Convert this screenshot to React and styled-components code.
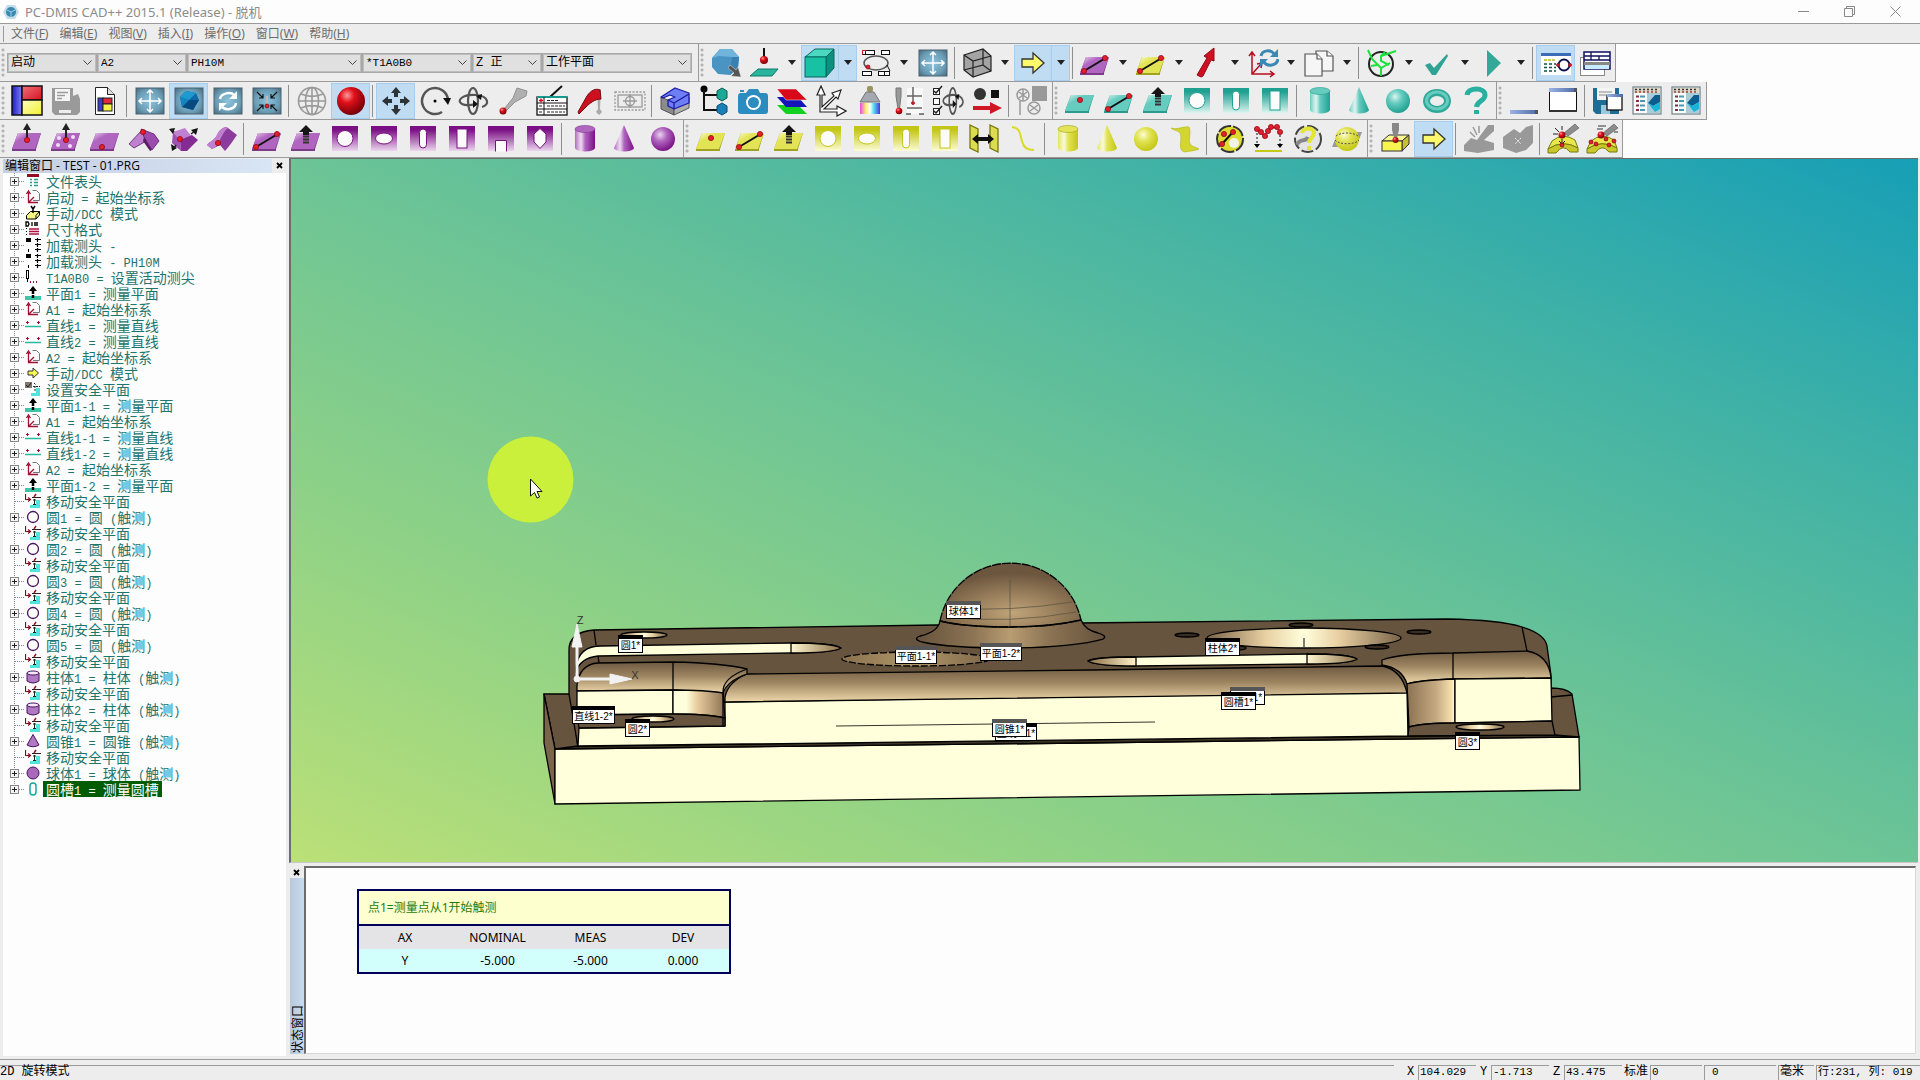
import React from "react";
import styled, { createGlobalStyle, css } from "styled-components";

const CJK = '"Noto Sans CJK SC", sans-serif';

const GlobalStyle = createGlobalStyle`
  *, *::before, *::after { box-sizing: border-box; }
  html, body { margin: 0; padding: 0; background: #ededed; }
  body { font-family: "Open Sans", ${CJK}; font-size: 12px; color: #000; }
  button, select { font: inherit; color: inherit; margin: 0; padding: 0; border: 0; background: none; border-radius: 0; }
  svg { display: block; }
`;

/* ------------------------------------------------------------------ frame */

const Window = styled.div`
  display: flex;
  flex-direction: column;
  height: 100vh;
  background: #ededed;
`;

const TitleBar = styled.header`
  display: flex;
  align-items: center;
  height: 24px;
  padding: 0 2px 0 3px;
  background: #fdfdfd;
  border-bottom: 1px solid #9a9a9a;
`;

const AppTitle = styled.h1`
  flex: 1;
  margin: 0;
  padding-left: 6px;
  font: 400 13px/20px "Noto Sans", ${CJK};
  color: #8c8c8c;
`;

const CaptionButton = styled.button`
  display: grid;
  place-items: center;
  width: 46px;
  height: 20px;
`;

const MenuBar = styled.nav`
  display: flex;
  align-items: center;
  height: 20px;
  padding-left: 3px;
  border-bottom: 1px solid #9a9a9a;
`;

const MenuEdge = styled.span`
  width: 1px;
  height: 16px;
  margin-right: 2px;
  background: #9a9a9a;
`;

const MenuItem = styled.button`
  padding: 0 6px 0 5px;
  font: 12px/18px "Noto Sans", ${CJK};
  color: #6c6c6c;
  white-space: nowrap;
`;

/* --------------------------------------------------------------- toolbars */

const ToolRow = styled.div`
  display: flex;
  height: 38px;
  background: #fdfdfd;
`;

const ToolGroup = styled.div`
  display: flex;
  align-items: center;
  padding-right: 1px;
  background: #ededed;
  border-right: 1px solid #9a9a9a;
  border-bottom: 1px solid #9a9a9a;
`;

const Grip = styled.span`
  flex: none;
  width: 7px;
  height: 30px;
  background: radial-gradient(circle at 3px 2px, #b4b4b4 1px, transparent 2px) 0 0 / 7px 5px;
`;

const Divider = styled.span`
  flex: none;
  width: 1px;
  height: 32px;
  margin: 0 3px 0 2px;
  background: #8e8e8e;
`;

const active = css`
  background: #c0dcf3;
  box-shadow: inset 0 0 0 1px #a4cdf0;
`;

const Tool = styled.button`
  display: grid;
  place-items: center;
  flex: none;
  width: 39px;
  height: 36px;
  ${(p) => p.$on && active}
`;

const SplitTool = styled.span`
  display: flex;
  height: 36px;
  ${(p) => p.$on && active}
`;

const SplitMain = styled.button`
  display: grid;
  place-items: center;
  width: 38px;
  border-right: 1px solid ${(p) => (p.$on ? "#a4cdf0" : "transparent")};
`;

const SplitCaret = styled.button`
  display: grid;
  place-items: center;
  width: 18px;
`;

const Combos = styled.div`
  display: flex;
  padding-right: 5px;
`;

const ComboBox = styled.label`
  display: grid;
  align-items: center;
  width: ${(p) => p.$w}px;
  height: 20px;
  background: #e0e0e0;
  border: 1px solid #a8a8a8;
  outline: 1px solid #bdbdbd;
  outline-offset: -2px;

  select {
    grid-area: 1 / 1;
    width: 100%;
    height: 18px;
    padding-left: 3px;
    appearance: none;
    font: ${(p) => (p.$latin ? 11 : 12)}px/18px "Liberation Mono", ${CJK};
  }
  svg {
    grid-area: 1 / 1;
    justify-self: end;
    margin-right: 4px;
    pointer-events: none;
  }
`;

/* -------------------------------------------------------------- workspace */

const Workspace = styled.main`
  flex: 1;
  min-height: 0;
  display: grid;
  grid-template-columns: 289px minmax(0, 1fr);
`;

const EditPanel = styled.section`
  display: flex;
  flex-direction: column;
  min-height: 0;
  margin: 0 3px 3px 3px;
  background: #fdfdfd;
`;

const PanelHead = styled.div`
  display: flex;
  align-items: center;
  height: 15px;
  background: #ededed;
`;

const PanelTitle = styled.h2`
  flex: 1;
  margin: 0;
  padding-left: 2px;
  font: 400 12px/14px "Open Sans", ${CJK};
  background: linear-gradient(90deg, #c4cfe2, #d8e5f4);
`;

const CloseButton = styled.button`
  display: grid;
  place-items: center;
  width: 14px;
  height: 12px;
`;

const Tree = styled.ul`
  list-style: none;
  margin: 0;
  padding: 0 0 0 7px;
`;

const TreeRow = styled.li`
  display: flex;
  align-items: center;
  height: 16px;
  color: #1d756c;
`;

const TreeToggle = styled.button`
  width: 15px;
  height: 16px;
`;

const TreeStub = styled.span`
  width: 15px;
  height: 16px;
`;

const TreeLabel = styled.span`
  height: 16px;
  margin-left: 2px;
  padding: 0 3px;
  font: 14px/20px "Liberation Mono", ${CJK};
  white-space: pre;
  ${(p) => p.$selected && css`
    background: #005c00;
    color: #fff;
  `}
`;

const Code = styled.span`
  font-size: 12px;
`;

const RightSide = styled.div`
  display: flex;
  flex-direction: column;
  min-width: 0;
  padding-right: 2px;
`;

const Viewport = styled.section`
  flex: 1;
  min-height: 0;
  border-left: 2px solid #6a6f6c;
  border-top: 1px solid #6a6f6c;
  border-bottom: 1px solid #c8c8c8;
  background: linear-gradient(to top right, #bbe077 0%, #90d286 25%, #6cc496 50%, #41b2a6 76%, #179fb6 100%);

  svg { width: 100%; height: 100%; }
`;

const StatusPane = styled.section`
  display: flex;
  height: 196px;
  padding: 3px 2px 5px 0;
`;

const StatusStrip = styled.div`
  display: flex;
  flex-direction: column;
  align-items: center;
  width: 15px;
`;

const StripTitle = styled.h2`
  flex: 1;
  width: 14px;
  margin: 0;
  font: 400 12px/14px ${CJK};
  writing-mode: vertical-rl;
  text-orientation: sideways;
  transform: rotate(180deg);
  padding-top: 1px;
  background: linear-gradient(90deg, #c8dcf0, #b8c8da);
`;

const Sheet = styled.div`
  flex: 1;
  padding: 21px 51px;
  background: #fdfdfd;
  border: 1px solid #d8d8d8;
  border-top: 2px solid #6c6c6c;
  border-left: 2px solid #6c6c6c;
`;

const Results = styled.table`
  width: 374px;
  border: 2px solid #00005c;
  border-collapse: collapse;
  table-layout: fixed;
  font: 12px/16px "Noto Sans", ${CJK};
  text-align: center;

  th { font-weight: 400; padding: 0; }
  td { padding: 0; }
`;

const ResultTitle = styled.tr`
  height: 35px;
  background: #feffcf;
  color: #1e7c0a;
  border-bottom: 2px solid #00005c;
  th { text-align: left; padding-left: 9px; }
`;

const ResultHead = styled.tr`
  height: 24px;
  background: #e4e4e6;
`;

const ResultRow = styled.tr`
  height: 24px;
  background: #d2fffc;
`;

/* ------------------------------------------------------------- status bar */

const StatusBar = styled.footer`
  display: flex;
  align-items: center;
  gap: 2px;
  height: 21px;
  border-top: 1px solid #9a9a9a;
  padding-top: 4px;
  white-space: pre;
`;

const Cell = styled.span`
  flex: none;
  width: ${(p) => p.$w}px;
  height: 15px;
  padding-left: ${(p) => p.$pad || 1}px;
  border-left: 1px solid #9a9a9a;
  border-top: 1px solid #9a9a9a;
  font: ${(p) => (p.$han ? 12 : 11)}px/13px "Liberation Mono", ${CJK};
`;

const Mode = styled.span`
  flex: 1;
  height: 15px;
  margin-right: 9px;
  border-top: 1px solid #9a9a9a;
  font: 12px/13px "Liberation Mono", ${CJK};
`;

const Tag = styled.span`
  flex: none;
  width: ${(p) => p.$w || 11}px;
  font: 12px/15px "Liberation Mono", ${CJK};
  text-align: center;
`;

/* ------------------------------------------------------------------ icons */

const TONES = {
  purple: { dark: "#7a1084", mid: "#b066c0", light: "#ecd6ee", edge: "#7c3a88" },
  teal: { dark: "#1fa090", mid: "#66ccc0", light: "#dcf4f0", edge: "#2c9a8c" },
  yellow: { dark: "#c4c616", mid: "#e2e456", light: "#fcfcd8", edge: "#a0a222" },
};

function SharedPaint() {
  return (
    <svg width="0" height="0" style={{ position: "absolute" }} aria-hidden="true">
      <defs>
        {Object.entries(TONES).map(([n, t]) => (
          <React.Fragment key={n}>
            <linearGradient id={`${n}-sq`} x1="0" y1="0" x2="0" y2="1">
              <stop offset="0" stopColor={t.dark} />
              <stop offset="0.15" stopColor={t.dark} />
              <stop offset="1" stopColor={t.light} />
            </linearGradient>
            <linearGradient id={`${n}-cyl`} x1="0" y1="0" x2="1" y2="0">
              <stop offset="0" stopColor={t.mid} />
              <stop offset="0.3" stopColor={t.light} stopOpacity="0.8" />
              <stop offset="0.5" stopColor={t.mid} />
              <stop offset="1" stopColor={t.dark} />
            </linearGradient>
            <radialGradient id={`${n}-ball`} cx="0.38" cy="0.32" r="0.7">
              <stop offset="0" stopColor={t.light} />
              <stop offset="0.4" stopColor={t.mid} />
              <stop offset="1" stopColor={t.dark} />
            </radialGradient>
            <linearGradient id={`${n}-plate`} x1="0" y1="0" x2="1" y2="1">
              <stop offset="0" stopColor={t.light} />
              <stop offset="0.35" stopColor={t.mid} />
              <stop offset="1" stopColor={t.mid} />
            </linearGradient>
          </React.Fragment>
        ))}
        <radialGradient id="red-ball" cx="0.36" cy="0.3" r="0.75">
          <stop offset="0" stopColor="#ff9a9a" />
          <stop offset="0.35" stopColor="#e0101a" />
          <stop offset="1" stopColor="#6c0006" />
        </radialGradient>
        <radialGradient id="steel" cx="0.5" cy="0.5" r="0.8">
          <stop offset="0" stopColor="#8cc4de" />
          <stop offset="0.55" stopColor="#6a9cb4" />
          <stop offset="1" stopColor="#3a5362" />
        </radialGradient>
        <linearGradient id="barblue" x1="0" y1="0" x2="1" y2="0">
          <stop offset="0" stopColor="#9ab4e4" />
          <stop offset="1" stopColor="#4c68a4" />
        </linearGradient>
        <linearGradient id="rainbow" x1="0" y1="0" x2="1" y2="0">
          <stop offset="0" stopColor="#e84af0" />
          <stop offset="0.3" stopColor="#f8f070" />
          <stop offset="0.5" stopColor="#fff" />
          <stop offset="0.7" stopColor="#50d8f0" />
          <stop offset="1" stopColor="#5030e0" />
        </linearGradient>
        <linearGradient id="pane-blue" x1="0" y1="0" x2="1" y2="0">
          <stop offset="0" stopColor="#1c1cc8" />
          <stop offset="1" stopColor="#8080f4" />
        </linearGradient>
        <linearGradient id="pane-red" x1="0" y1="0" x2="1" y2="1">
          <stop offset="0" stopColor="#f07078" />
          <stop offset="1" stopColor="#d81020" />
        </linearGradient>
        <linearGradient id="pane-yellow" x1="0" y1="0" x2="1" y2="1">
          <stop offset="0" stopColor="#fcfcc0" />
          <stop offset="1" stopColor="#f4f030" />
        </linearGradient>
      </defs>
    </svg>
  );
}

const Dot = ({ x, y, r = 2.6 }) => <circle cx={x} cy={y} r={r} fill="#e0202c" stroke="#8c0010" strokeWidth="0.7" />;

const Plate = ({ tone }) => (
  <g>
    <path d="M1 26 L7 10 H30 L25 26 V28 H1Z" fill={TONES[tone].edge} />
    <path d="M1 26 L7 10 H30 L24 26Z" fill={`url(#${tone}-plate)`} />
  </g>
);

const PlateLine = ({ tone }) => (
  <g>
    <Plate tone={tone} />
    <path d="M5 24 L25 12" stroke="#111" strokeWidth="2" />
    <Dot x={5} y={24} />
    <Dot x={26} y={11} />
  </g>
);

const HOLES = {
  circle: <circle cx="16" cy="15.5" r="8" />,
  ellipse: <ellipse cx="16" cy="15.5" rx="8.5" ry="5.5" />,
  slot: <rect x="12.5" y="6" width="7" height="19" rx="3.5" />,
  square: <rect x="11" y="6" width="10" height="19" />,
  notch: <path d="M10.500 28.500 V17.500 H21.500 V28.500" />,
  poly: <path d="M16 5.500 L22 11 V19 L16 25.500 L10 19 V11Z" />,
};

const Hole = ({ tone, shape }) => (
  <g>
    <rect x="3" y="3" width="26" height="25" fill={`url(#${tone}-sq)`} />
    <g fill="#fbfbfb" stroke={TONES[tone].dark} strokeWidth="1">{HOLES[shape]}</g>
  </g>
);

const Cylinder = ({ tone }) => (
  <g>
    <path d="M6 6 V25 A10 3.500 0 0 0 26 25 V6Z" fill={`url(#${tone}-cyl)`} />
    <ellipse cx="16" cy="6" rx="10" ry="3.500" fill={TONES[tone].mid} stroke={TONES[tone].edge} strokeWidth="0.6" />
  </g>
);

const Cone = ({ tone }) => <path d="M16 2 L26 25 A10 3.500 0 0 1 6 25Z" fill={`url(#${tone}-cyl)`} />;
const Ball = ({ tone }) => <circle cx="16" cy="16" r="12" fill={`url(#${tone}-ball)`} />;

const PlateUp = ({ tone }) => (
  <g>
    <Plate tone={tone} />
    <path d="M16 2 L23 9 H19 V12 H13 V9 H9Z" fill="#151515" />
    <path d="M13 13.500 H19 M13 16.500 H19 M13 19.500 H19" stroke="#333" strokeWidth="2" />
  </g>
);

const SteelTile = ({ children }) => (
  <g>
    <rect x="2" y="3" width="28" height="26" fill="url(#steel)" stroke="#4a6270" />
    {children}
  </g>
);

const MoveTile = () => (
  <SteelTile>
    <path d="M16 5 V27 M5 16 H27 M13 8 L16 5 L19 8 M13 24 L16 27 L19 24 M8 13 L5 16 L8 19 M24 13 L27 16 L24 19" fill="none" stroke="#fff" strokeWidth="1.500" />
  </SteelTile>
);

const YellowArrow = () => <path d="M5 12 H16 V6 L27 16 L16 26 V20 H5Z" fill="#fbf86c" stroke="#333" strokeWidth="1.300" />;

const Orbit = () => (
  <g fill="none" stroke="#555" strokeWidth="2.200">
    <ellipse cx="15" cy="16" rx="5" ry="13" />
    <path d="M24 22 C32 20 31 11 18 10 C4 9 -2 16 4 19 C8 21 14 20 18 19" />
    <path d="M15 15 L20 19 L15 23Z M18 11 L23 15 L24 9Z" fill="#111" stroke="none" />
  </g>
);

const ScanPart = ({ many }) => (
  <g>
    <path d="M5 18 Q16 9 28 17 L31 25 Q16 16 1 26Z" fill="#e8e84c" stroke="#777a10" />
    <path d="M1 26 Q16 16 31 25 V29 H23 Q16 20 9 30 H1Z" fill="#c8c828" stroke="#777a10" />
    <path d="M17 10 L28 1 L32 5 L21 13Z" fill="#8c8c8c" stroke="#555" strokeWidth="0.600" />
    <circle cx="15" cy="12" r="3.500" fill="url(#red-ball)" />
    {many ? (
      <g>
        <Dot x={5} y={19} r={2} /><Dot x={10} y={21} r={2} /><Dot x={23} y={22} r={2} /><Dot x={28} y={18} r={2} /><Dot x={20} y={16} r={2} />
        <path d="M12 3 H20 M11 6 H17 M28 9 L32 9" stroke="#333" />
      </g>
    ) : (
      <g>
        <path d="M15 16 V20 M12 18 L15 21 L18 18 M8 5 L12 9 M6 11 H11 M15 3 V7" fill="none" stroke="#222" />
        <Dot x={15} y={22} r={2} />
      </g>
    )}
  </g>
);

const Layout = () => (
  <g>
    <rect x="2" y="2" width="28" height="27" fill="#fafafa" stroke="#7a8a90" strokeWidth="1.300" />
    <rect x="3" y="3" width="26" height="5" fill="#ddd6c8" />
    <path d="M4 4.500 H27" stroke="#333" strokeWidth="1.500" strokeDasharray="2 2" />
    <path d="M4 7 H27" stroke="#a04030" strokeWidth="1.500" strokeDasharray="2 2" />
    <path d="M5 11.500 H8 M5 16 H8 M5 20.500 H8 M5 25 H8" stroke="#803040" strokeWidth="2" />
    <path d="M9 11.500 H14 M9 16 H14 M9 20.500 H14 M9 25 H14" stroke="#4a98b0" strokeWidth="2" />
    <rect x="16" y="8" width="13" height="20" fill="#a8ccd8" />
    <path d="M17 18 L24 10 H29 V17 L22 21Z" fill="#0c5c90" />
    <path d="M17 18 L22 21 L29 17 V24 L24 27Z" fill="#18b4d8" />
  </g>
);

const ICONS = {
  layout: (
    <g stroke="#111" strokeWidth="1.500">
      <rect x="1" y="1" width="10" height="29" fill="url(#pane-blue)" />
      <rect x="11" y="1" width="20" height="14" fill="url(#pane-red)" />
      <rect x="11" y="15" width="20" height="15" fill="url(#pane-yellow)" />
    </g>
  ),
  grayDoc: (
    <g>
      <path d="M2 3 H23 V11 L28 9 L30 14 V27 L27 30 H5 L2 27Z" fill="#9a9a9a" />
      <rect x="5" y="4" width="15" height="12" fill="#f4f4f4" />
      <path d="M7 7.500 H18 M7 10.500 H15 M7 13.500 H12" stroke="#9a9a9a" strokeWidth="1.500" />
      <rect x="9" y="25" width="12" height="3" fill="#ededed" />
    </g>
  ),
  pageLayout: (
    <g stroke="#222" strokeWidth="1">
      <path d="M6.500 2.500 H18.500 L25.500 9.500 V29.500 H6.500Z" fill="#fff" />
      <path d="M18.500 2.500 V9.500 H25.500" fill="#ddd" />
      <rect x="9" y="13" width="5" height="13" fill="#3a3ad8" />
      <rect x="14" y="13" width="9" height="6" fill="#e02838" />
      <rect x="14" y="19" width="9" height="7" fill="#f6f248" />
    </g>
  ),
  moveTile: <MoveTile />,
  cubeTile: (
    <SteelTile>
      <path d="M7 12 L13 6 L23 8 L26 15 L20 25 L9 22Z" fill="#0e6aa8" />
      <path d="M13 6 L23 8 L16 15 L7 12Z" fill="#1f9ad0" />
      <path d="M16 15 L26 15 L20 25 L9 22Z" fill="#074a80" />
      <path d="M7 12 L16 15 L9 22Z" fill="#1584c0" />
    </SteelTile>
  ),
  refreshTile: (
    <SteelTile>
      <path d="M8 14 C9 8 19 6 23 11 M24 18 C23 25 13 26 9 21" fill="none" stroke="#fff" strokeWidth="2.500" />
      <path d="M25 6 V14 H17Z M7 26 V18 H15Z" fill="#fff" />
    </SteelTile>
  ),
  zoomTile: (
    <SteelTile>
      <path d="M6 7 L12 13 M26 7 L20 13 M6 26 L12 20 M26 26 L20 20 M12 9 V13 H8 M20 9 V13 H24 M12 24 V20 H8 M20 24 V20 H24" fill="none" stroke="#111" strokeWidth="1.200" />
      <path d="M16 11 V20" stroke="#bbb" strokeWidth="2" />
      <Dot x={16} y={21} r={2} />
    </SteelTile>
  ),
  globe: (
    <g fill="none" stroke="#999" strokeWidth="1.600">
      <circle cx="16" cy="16" r="13.500" />
      <ellipse cx="16" cy="16" rx="6.500" ry="13.500" />
      <path d="M3 16 H29 M5 9 C12 12 20 12 27 9 M5 23 C12 20 20 20 27 23 M16 2 V30" />
    </g>
  ),
  redBall: <circle cx="16" cy="16" r="14" fill="url(#red-ball)" />,
  arrows: (
    <path d="M16 2 L21 8 H18 V12 H14 V8 H11Z M16 30 L21 24 H18 V20 H14 V24 H11Z M2 16 L8 11 V14 H12 V18 H8 V21Z M30 16 L24 11 V14 H20 V18 H24 V21Z" fill="#2c3438" />
  ),
  rotate: (
    <g>
      <path d="M23 27 A13 13 0 1 1 29 15" fill="none" stroke="#555" strokeWidth="2.500" />
      <path d="M24 13 H32 L29 20Z" fill="#111" />
      <circle cx="16" cy="16" r="1.500" />
    </g>
  ),
  orbit: <Orbit />,
  probe: (
    <g>
      <path d="M7 24 L16 13 L20 3 L30 6 L29 11 L18 17 L9 26Z" fill="#b0b0b0" stroke="#909090" />
      <circle cx="6" cy="26" r="3.500" fill="url(#red-ball)" />
    </g>
  ),
  table: (
    <g>
      <path d="M14 12 L26 1" stroke="#111" strokeWidth="2" />
      <rect x="1" y="12" width="30" height="18" fill="#fff" stroke="#111" strokeWidth="1.300" />
      <rect x="1" y="11" width="30" height="2" fill="#169a90" />
      <path d="M8 12 V30 M1 18 H31 M1 24 H31" stroke="#111" />
      <path d="M3 15.500 H7 M5 13.500 V17.500" stroke="#d01020" strokeWidth="1.500" />
      <path d="M11 15.500 H22 M3 21 H7 M11 21 H29 M3 27 H7 M11 27 H29" stroke="#222" strokeDasharray="3 1" />
    </g>
  ),
  caliper: (
    <g>
      <path d="M22 4 L26 4 L25 24 L27 27 L24 30 L21 27 L23 24Z" fill="#aaa" />
      <path d="M4 29 L3 27 L12 11 C16 5 21 3 25 5 L26 14 C20 14 15 18 11 22Z" fill="#cc1020" stroke="#7a0810" />
    </g>
  ),
  camFrame: (
    <g fill="none" stroke="#999" strokeWidth="1.300">
      <rect x="1" y="7" width="30" height="18" strokeDasharray="2 1.500" />
      <rect x="4" y="10" width="24" height="12" />
      <circle cx="16" cy="16" r="4.500" />
      <path d="M16 9 V23 M9 16 H23" />
    </g>
  ),
  blueBlock: (
    <g strokeLinejoin="round">
      <path d="M2 12 L15 18 V30 L2 24Z" fill="#8c8c8c" stroke="#555" />
      <path d="M15 18 L30 12 V23 L15 30Z" fill="#b0b0b0" stroke="#555" />
      <path d="M2 12 L16 3 L30 8 V18 L15 24 L9 21 V15 L16 12 L11 10 L4 13Z" fill="#6e7ef4" stroke="#1a1aa0" strokeWidth="1.300" />
      <path d="M15 18 L30 9 M15 18 V24 M15 18 L9 15" stroke="#1a1aa0" strokeWidth="1.300" />
    </g>
  ),
  treeTool: (
    <g>
      <circle cx="6" cy="4" r="3.500" />
      <path d="M6 4 V25 H19 M6 10 H19" fill="none" stroke="#111" strokeWidth="2" />
      <path d="M19 6 L24 3 L29 6 V13 L24 16 L19 13Z" fill="#1aa898" stroke="#0a5c54" />
      <path d="M19 21 L24 18 L29 21 V27 L24 30 L19 27Z" fill="#1a80b8" stroke="#0a4c74" />
    </g>
  ),
  camera: (
    <g>
      <path d="M4 8 H9 L12 4 H21 L23 8 H28 Q31 8 31 11 V26 Q31 29 28 29 H4 Q1 29 1 26 V11 Q1 8 4 8Z" fill="#2c8cc0" />
      <circle cx="16.500" cy="17.500" r="7.500" fill="#fff" />
      <circle cx="16.500" cy="17.500" r="5.500" fill="#2c8cc0" />
      <path d="M3 6 H7" stroke="#2c8cc0" strokeWidth="2" />
    </g>
  ),
  layers: (
    <g>
      <path d="M1 20 L22 20 L31 29 L10 29Z" fill="#14d020" />
      <path d="M1 12 L22 12 L31 22 L10 22Z" fill="#1414b8" />
      <path d="M1 4 L20 4 L31 15 L10 15Z" fill="#d80818" stroke="#ededed" strokeWidth="0.500" />
    </g>
  ),
  axes: (
    <g fill="#fff" stroke="#222" strokeWidth="1.200">
      <path d="M5 26 V10 H2 L6 1 L10 10 H7 V22 L19 11 L17 8 L26 5 L23 14 L21 12 L9 24 H22 V21 L31 26 L22 31 V27 H5Z" />
    </g>
  ),
  lamp: (
    <g>
      <rect x="13" y="1" width="6" height="6" rx="2" fill="#9c9460" />
      <path d="M12 7 H20 L26 17 H6Z" fill="#a4a8b0" stroke="#777" />
      <path d="M6 18 H26 V29 H6Z" fill="url(#rainbow)" />
    </g>
  ),
  probePair: (
    <g>
      <path d="M3 3 H8 V11 L6.500 24 H5 L3 11Z" fill="#999" stroke="#777" />
      <circle cx="6" cy="26" r="3.300" fill="url(#red-ball)" />
      <rect x="14" y="3" width="16" height="26" fill="#f8f8f8" />
      <path d="M20 2 V12 M14 11 H29 M14 23 H29 M20 12 V16" stroke="#666" strokeWidth="1.500" />
      <Dot x={20} y={18} r={1.500} />
      <path d="M13 29 H18 M26 29 H31" stroke="#111" />
    </g>
  ),
  checksOrbit: (
    <g>
      <g fill="#fff" stroke="#222">
        <rect x="1.500" y="3.500" width="6" height="6" /><rect x="1.500" y="13.500" width="6" height="6" /><rect x="1.500" y="23.500" width="6" height="6" />
        <path d="M2 6 L4 8 L10 1 M2 26 L4 28 L10 21" fill="none" strokeWidth="1.500" />
      </g>
      <g transform="translate(10 0) scale(0.720 1)"><Orbit /></g>
    </g>
  ),
  ballBox: (
    <g>
      <circle cx="9" cy="9" r="6" fill="#333" />
      <rect x="20" y="5" width="8" height="8" fill="#111" />
      <path d="M2 21 H19 V17 L31 23 L19 29 V25 H2Z" fill="#d01824" />
    </g>
  ),
  grayCircles: (
    <g>
      <rect x="16" y="1" width="15" height="15" fill="#999" />
      <g fill="none" stroke="#999" strokeWidth="1.500">
        <circle cx="7" cy="10" r="6" /><circle cx="18" cy="23" r="6" /><path d="M4 16 V30 M3 7 L11 13 M3 13 L11 7 M14 20 L22 26 M14 26 L22 20 M7 4 V16" />
      </g>
    </g>
  ),
  torus: (
    <g>
      <ellipse cx="16" cy="16" rx="10.500" ry="8.500" fill="none" stroke="#2fa898" strokeWidth="7" />
      <ellipse cx="16" cy="15.500" rx="10.500" ry="8.500" fill="none" stroke="#66ccc0" strokeWidth="3" />
    </g>
  ),
  question: (
    <g>
      <path d="M7 10 C8 2 25 2 25 10 C25 16 17 16 16.500 22" fill="none" stroke="#2ab0a0" strokeWidth="5" />
      <rect x="14" y="25" width="5" height="4" fill="#2ab0a0" />
    </g>
  ),
  winMin: <g><rect x="2" y="25" width="28" height="4" fill="url(#barblue)" /><rect x="27" y="25" width="3" height="4" fill="#555" /></g>,
  winFull: (
    <g>
      <rect x="2.500" y="4" width="27" height="22" fill="#fff" stroke="#111" />
      <rect x="2" y="3" width="28" height="4" fill="url(#barblue)" /><rect x="27" y="3" width="3" height="4" fill="#555" />
      <path d="M2 26 H30" stroke="#333" strokeWidth="2" />
    </g>
  ),
  saveWin: (
    <g>
      <path d="M1 3 H27 V29 H4 L1 26Z" fill="#1f6c94" />
      <rect x="5" y="3" width="18" height="12" fill="#f4f4f4" />
      <path d="M7 7 H20 M7 10 H16" stroke="#888" />
      <rect x="9" y="20" width="9" height="9" fill="#9cc8dc" />
      <rect x="15" y="11" width="15" height="14" fill="#fff" stroke="#111" strokeWidth="1.300" /><rect x="15" y="9" width="16" height="3" fill="url(#barblue)" />
    </g>
  ),
  layoutA: <Layout />,
  octagon: (
    <g>
      <path d="M2 11 L10 2 L22 2 L29 10 L28 21 L20 28 L8 27 L2 20Z" fill="#4a94c4" />
      <path d="M10 2 L22 2 L29 10 L22 10 L9 9 L2 11Z" fill="#70b4dc" />
      <path d="M22 10 L29 10 L28 21 L20 28Z" fill="#3a80b0" />
      <path d="M20 18 L26 23 L28 20 L31 30 L21 29 L24 26 L18 21Z" fill="#555" stroke="#ddd" strokeWidth="0.500" />
    </g>
  ),
  probePlane: (
    <g>
      <path d="M16 1 V10" stroke="#111" strokeWidth="2" />
      <circle cx="16" cy="13" r="4" fill="url(#red-ball)" />
      <path d="M2 29 L10 22 H30 L24 29Z" fill="#2ab49c" stroke="#0c7c6c" />
    </g>
  ),
  cube: (
    <g stroke="#08685c">
      <path d="M1 10 L11 2 H30 L22 10Z" fill="#4ad8c0" />
      <path d="M22 10 L30 2 V21 L22 30Z" fill="#0c9080" />
      <rect x="1" y="10" width="21" height="20" fill="#18c0a4" />
    </g>
  ),
  features: (
    <g fill="#fff" stroke="#111">
      <ellipse cx="16" cy="16" rx="12" ry="7" fill="none" stroke="#555" strokeWidth="1.500" />
      <rect x="2.500" y="3.500" width="12" height="4" /><rect x="21.500" y="3.500" width="8" height="4" />
      <rect x="2.500" y="24.500" width="9" height="4" /><rect x="18.500" y="24.500" width="11" height="4" />
      <path d="M5.500 3 V8 M24.500 24 V29 M27 18 L30 24" />
      <path d="M2.500 7.500 V3.500 H6" stroke="#d01020" /><Dot x={8} y={20} r={2} />
    </g>
  ),
  wireCube: (
    <g fill="#9a9a9a" stroke="#222" strokeWidth="1.200">
      <path d="M3 8 L22 2 L30 9 V24 L12 30 L3 23Z" fill="#a4a4a4" />
      <path d="M3 8 L12 14 L30 9 M12 14 V30 M22 2 V18 L3 23 M22 18 L30 24" fill="none" />
    </g>
  ),
  yArrow: <YellowArrow />,
  redArrow: <path d="M10 30 L6 28 L16 11 L13 9 L23 1 L23 14 L20 13 L12 29Z" fill="#d01020" stroke="#900814" />,
  axisRefresh: (
    <g>
      <path d="M5 6 V27 H26 M2 9 L5 5 L8 9 M23 24 L27 27 L23 30 M5 27 L15 16 M10 17 L15 16 L14 21" fill="none" stroke="#b80c20" strokeWidth="1.500" />
      <path d="M14 9 C15 3 24 2 27 7 M31 12 C30 19 20 20 17 15" fill="none" stroke="#3a88b4" strokeWidth="3" />
      <path d="M31 2 V10 H23Z M13 20 V12 H21Z" fill="#3a88b4" />
    </g>
  ),
  pages: (
    <g fill="#f6f6f6" stroke="#555" strokeWidth="1.200">
      <path d="M13 4 H24 L30 9 V24 H13Z" /><path d="M24 4 V9 H30" />
      <path d="M2 7 H14 L19 12 V29 H2Z" /><path d="M14 7 V12 H19" />
    </g>
  ),
  pathGlobe: (
    <g fill="none">
      <circle cx="16" cy="17" r="12" stroke="#222" strokeWidth="2" />
      <path d="M3 3 L7 12 L16 21 L25 16 M31 4 L16 9 V14 L24 18 M6 19 L12 18 M16 21 V29 M20 5 L16 9" stroke="#1ce03c" strokeWidth="2" />
    </g>
  ),
  check: <path d="M4 18 L9 16 L13 21 L26 7 L27 9 L15 28 L11 28Z" fill="#2fa494" />,
  play: <path d="M10 3 L24 16 L10 30Z" fill="#34a898" />,
  listWin: (
    <g>
      <rect x="1" y="6" width="30" height="22" fill="#fff" /><rect x="1" y="6" width="30" height="3" fill="#3a6cb8" />
      <path d="M4 13 H16" stroke="#b8bc20" strokeWidth="1.500" strokeDasharray="3 1" />
      <path d="M4 17 H16 M4 20.500 H16 M4 24 H16" stroke="#0c5048" strokeWidth="1.500" strokeDasharray="3 2" />
      <circle cx="24" cy="18" r="5.500" fill="#fff" stroke="#101050" strokeWidth="2" /><Dot x={18} y={18} r={1.500} /><Dot x={30} y={18} r={1.500} />
    </g>
  ),
  formWin: (
    <g stroke="#101060">
      <rect x="1.500" y="10.500" width="24" height="18" fill="#fff" stroke="#888" />
      <rect x="5" y="5" width="26" height="17" fill="#fff" strokeWidth="1.500" />
      <path d="M5 9 H31 M5 13 H31 M12 5 V13 M20 9 V13" strokeWidth="1.300" />
      <rect x="5" y="15" width="26" height="3" fill="#888" stroke="none" /><rect x="6" y="18" width="24" height="4" fill="#c8ecfc" stroke="none" />
    </g>
  ),
  vecPoint: (
    <g><Plate tone="purple" /><path d="M16 17 V5" stroke="#222" strokeWidth="2" /><path d="M16 0 L20 7 H12Z" fill="#222" /><Dot x={16} y={17} /></g>
  ),
  surfPoint: (
    <g><Plate tone="purple" /><path d="M16 17 V5" stroke="#222" strokeWidth="2" /><path d="M16 0 L20 7 H12Z" fill="#222" /><Dot x={16} y={17} />
      <g fill="#f4dcf8"><circle cx="9" cy="15" r="2" /><circle cx="23" cy="14" r="2" /><circle cx="8" cy="22" r="2" /><circle cx="20" cy="23" r="2" /></g></g>
  ),
  edgePoint: <g><Plate tone="purple" /><Dot x={13} y={24} /></g>,
  anglePoint: (
    <g>
      <path d="M1 21 L13 8 L17 8 L20 17 L6 25Z" fill="#c080d0" stroke="#5c1c68" strokeWidth="0.800" />
      <path d="M13 6 L26 11 L31 18 L24 27 L16 14Z" fill="#9c4cac" stroke="#5c1c68" strokeWidth="0.800" />
      <path d="M16 14 L24 27 L22 28 L15 18Z" fill="#5c1c68" /><Dot x={15} y={9} />
    </g>
  ),
  cornerPoint: (
    <g>
      <path d="M6 9 L18 5 L25 14 L13 17Z" fill="#c080d0" />
      <path d="M6 9 L13 17 L14 28 L5 20Z" fill="#a050b0" />
      <path d="M13 17 L25 12 L31 17 L20 28 L14 28Z" fill="#842c94" />
      <path d="M2 6 L8 5 L6 11Z M31 5 L29 12 L24 7Z M5 28 L4 21 L10 25Z" fill="#111" /><path d="M4 6 L7 9 M28 8 L24 11 M7 25 L9 22" stroke="#222" strokeWidth="1.500" fill="none" /><Dot x={13} y={16} />
    </g>
  ),
  highPoint: (
    <g>
      <path d="M1 22 C4 18 8 18 11 12 C14 5 20 3 22 5 L31 12 C28 16 26 20 19 28 L14 22 L6 26Z" fill="#8c3c9c" />
      <path d="M1 22 C4 18 8 18 11 12 C14 5 20 3 22 5 C18 8 14 16 12 22 L6 26Z" fill="#c080d0" /><Dot x={12} y={20} />
    </g>
  ),
  distance: (
    <g>
      <path d="M2 2 L10 6 V29 L2 25Z M22 2 L30 6 V29 L22 25Z" fill="#dcdc50" stroke="#77780c" strokeWidth="1.300" />
      <path d="M4 16 L10 11 V14 H20 V11 L26 16 L20 21 V18 H10 V21Z" fill="#111" />
    </g>
  ),
  curve: <path d="M5 4 C14 5 13 12 15 18 C16 24 20 27 27 27" fill="none" stroke="#d8dc24" strokeWidth="2" />,
  freeSurf: <path d="M2 5 C8 7 16 3 20 4 C23 10 18 18 22 22 C24 24 27 24 30 26 C26 28 20 28 15 29 C8 26 14 16 11 10 C9 7 5 8 2 5Z" fill="#d4d630" stroke="#b0b414" strokeWidth="0.600" />,
  circlePoints: (
    <g>
      <circle cx="16" cy="16" r="13" fill="#dcdc30" stroke="#333" strokeWidth="2" strokeDasharray="14 2" />
      <circle cx="20" cy="20" r="5" fill="#f2f2e8" /><path d="M8 21 L19 9" stroke="#111" strokeWidth="2" />
      <Dot x={8} y={21} /><Dot x={10} y={11} /><Dot x={19} y={9} />
    </g>
  ),
  pathPoints: (
    <g>
      <path d="M4 6 L11 13 L18 4 L26 6" stroke="#8c0010" fill="none" />
      <Dot x={4} y={6} /><Dot x={8} y={9} /><Dot x={12} y={13} /><Dot x={15} y={8} /><Dot x={18} y={4} /><Dot x={24} y={4} /><Dot x={27} y={9} />
      <path d="M4 10 V23 M27 12 V23" stroke="#111" strokeDasharray="2 2" /><path d="M1 21 H7 L4 25Z M24 21 H30 L27 25Z" /><path d="M2 28 H29" stroke="#c4c818" strokeWidth="2" />
    </g>
  ),
  helpCircle: (
    <g>
      <circle cx="16" cy="16" r="13" fill="#e4e4e4" stroke="#444" strokeWidth="2" strokeDasharray="12 3" />
      <path d="M5 22 C8 14 14 20 16 14" fill="none" stroke="#888" strokeWidth="4" />
      <path d="M10 10 C11 4 22 4 22 10 C22 15 17 15 17 20" fill="none" stroke="#e4e434" strokeWidth="4" /><rect x="15" y="23" width="4" height="4" fill="#e4e434" />
    </g>
  ),
  ballPlane: (
    <g><path d="M1 24 L7 9 H31 L25 24Z" fill="#999" /><circle cx="16" cy="16" r="12" fill="url(#yellow-ball)" /><path d="M4 17 C8 22 24 22 28 17 M5 13 C10 9 22 9 27 13" fill="none" stroke="#555" strokeDasharray="2 1.500" /></g>
  ),
  manual: (
    <g>
      <path d="M3 18 L10 12 H30 L23 18Z" fill="#fbf890" stroke="#333" /><path d="M23 18 L30 12 V21 L23 28Z" fill="#c4c030" stroke="#333" /><rect x="3" y="18" width="20" height="10" fill="#f8f450" stroke="#333" />
      <path d="M13 0 H20 V7 L18 15 H15 L13 7Z" fill="#888" /><circle cx="16.500" cy="17" r="3" fill="url(#red-ball)" />
    </g>
  ),
  grayScan: <g fill="#999"><path d="M1 22 L8 15 L14 17 L25 2 H31 V8 L21 17 L31 20 V27 L15 30 L1 28Z" /><path d="M10 4 L14 12 M7 9 L12 14 M16 3 V10" stroke="#999" strokeWidth="1.500" /></g>,
  grayBlock: <g fill="#999"><path d="M1 14 L12 6 L18 10 L24 4 L31 2 V20 L24 27 L14 30 L1 25Z" /><path d="M13 15 L19 21 M19 15 L13 21" stroke="#ededed" strokeDasharray="2 1" /></g>,
  scanOne: <ScanPart />,
  scanMany: <ScanPart many />,
};

["purple", "teal", "yellow"].forEach((t) => {
  ICONS[`${t}-line`] = <PlateLine tone={t} />;
  ICONS[`${t}-plane`] = <PlateUp tone={t} />;
  ICONS[`${t}-point`] = <g><Plate tone={t} /><Dot x={16} y={15} /></g>;
  ICONS[`${t}-cylinder`] = <Cylinder tone={t} />;
  ICONS[`${t}-cone`] = <Cone tone={t} />;
  ICONS[`${t}-sphere`] = <Ball tone={t} />;
  Object.keys(HOLES).forEach((s) => {
    ICONS[`${t}-${s}`] = <Hole tone={t} shape={s} />;
  });
});

const Icon = ({ name }) => (
  <svg width="32" height="32" viewBox="0 0 32 32" aria-hidden="true">{ICONS[name]}</svg>
);

const Caret = () => <svg width="8" height="5" viewBox="0 0 8 5" aria-hidden="true"><path d="M0 0 H8 L4 5Z" fill="#222" /></svg>;
const Cross = () => <svg width="7" height="7" viewBox="0 0 7 7" aria-hidden="true"><path d="M1 1 L6 6 M6 1 L1 6" stroke="#000" strokeWidth="1.800" /></svg>;

/* a name, "|" for a divider, "+" in front for a pressed tool, "v" after ":" for a split tool */
function Tools({ items }) {
  return items.map((raw, i) => {
    if (raw === "|") return <Divider key={i} />;
    const on = raw.startsWith("+");
    const [name, kind] = raw.replace("+", "").split(":");
    if (kind === "v") {
      return (
        <SplitTool key={i} $on={on}>
          <SplitMain $on={on} aria-label={name}><Icon name={name} /></SplitMain>
          <SplitCaret aria-label={`${name} options`}><Caret /></SplitCaret>
        </SplitTool>
      );
    }
    return <Tool key={i} $on={on} aria-label={name} aria-pressed={on}><Icon name={name} /></Tool>;
  });
}

const TOOLBARS = [
  [["octagon", "probePlane:v", "+cube:v", "features:v", "moveTile", "|", "wireCube:v", "+yArrow:v", "|", "purple-line:v", "yellow-line:v", "redArrow:v", "axisRefresh:v", "pages:v", "|", "pathGlobe:v", "check:v", "play:v", "|", "+listWin", "formWin"]],
  [
    ["layout", "grayDoc", "pageLayout", "|", "moveTile", "+cubeTile", "refreshTile", "zoomTile", "|", "globe", "+redBall", "|", "+arrows", "rotate", "orbit", "probe", "table", "caliper", "camFrame", "|", "blueBlock", "treeTool", "camera", "layers", "axes", "lamp", "probePair", "checksOrbit", "ballBox", "|", "grayCircles"],
    ["teal-point", "teal-line", "teal-plane", "teal-circle", "teal-slot", "teal-square", "|", "teal-cylinder", "teal-cone", "teal-sphere", "torus", "question"],
    ["winMin", "winFull", "|", "saveWin", "layoutA", "layoutA"],
  ],
  [
    ["vecPoint", "surfPoint", "edgePoint", "anglePoint", "cornerPoint", "highPoint", "|", "purple-line", "purple-plane", "purple-circle", "purple-ellipse", "purple-slot", "purple-square", "purple-notch", "purple-poly", "|", "purple-cylinder", "purple-cone", "purple-sphere"],
    ["yellow-point", "yellow-line", "yellow-plane", "yellow-circle", "yellow-ellipse", "yellow-slot", "yellow-square", "distance", "curve", "|", "yellow-cylinder", "yellow-cone", "yellow-sphere", "freeSurf", "|", "circlePoints", "pathPoints", "helpCircle", "ballPlane"],
    ["manual", "+yArrow", "|", "grayScan", "grayBlock", "|", "scanOne", "scanMany"],
  ],
];

const COMBOS = [
  { label: "坐标系状态", value: "启动", w: 90 },
  { label: "坐标系", value: "A2", w: 90, latin: true },
  { label: "测头", value: "PH10M", w: 175, latin: true },
  { label: "测尖", value: "*T1A0B0", w: 110, latin: true },
  { label: "方向", value: "Z 正", w: 70 },
  { label: "平面", value: "工作平面", w: 150 },
];

const MENUS = [["文件", "F"], ["编辑", "E"], ["视图", "V"], ["插入", "I"], ["操作", "O"], ["窗口", "W"], ["帮助", "H"]];

/* ------------------------------------------------------------------- tree */

const MOVE = { icon: "move", text: "移动安全平面", leaf: true };

const PROGRAM = [
  { icon: "header", text: "文件表头" },
  { icon: "align", text: "启动 = 起始坐标系" },
  { icon: "dcc", text: "手动/DCC 模式" },
  { icon: "dim", text: "尺寸格式" },
  { icon: "load", text: "加载测头 -" },
  { icon: "load", text: "加载测头 - PH10M" },
  { icon: "tip", text: "T1A0B0 = 设置活动测尖" },
  { icon: "plane", text: "平面1 = 测量平面" },
  { icon: "align", text: "A1 = 起始坐标系" },
  { icon: "line", text: "直线1 = 测量直线" },
  { icon: "line", text: "直线2 = 测量直线" },
  { icon: "align", text: "A2 = 起始坐标系" },
  { icon: "arrow", text: "手动/DCC 模式" },
  { icon: "clear", text: "设置安全平面" },
  { icon: "plane", text: "平面1-1 = 测量平面" },
  { icon: "align", text: "A1 = 起始坐标系" },
  { icon: "line", text: "直线1-1 = 测量直线" },
  { icon: "line", text: "直线1-2 = 测量直线" },
  { icon: "align", text: "A2 = 起始坐标系" },
  { icon: "plane", text: "平面1-2 = 测量平面" },
  MOVE,
  ...[1, 2, 3, 4, 5].flatMap((n) => [{ icon: "circle", text: `圆${n} = 圆 (触测)` }, MOVE]),
  { icon: "cyl", text: "柱体1 = 柱体 (触测)" },
  MOVE,
  { icon: "cyl", text: "柱体2 = 柱体 (触测)" },
  MOVE,
  { icon: "cone", text: "圆锥1 = 圆锥 (触测)" },
  MOVE,
  { icon: "ball", text: "球体1 = 球体 (触测)" },
  { icon: "slot", text: "圆槽1 = 测量圆槽", selected: true },
];

const TREE_ICONS = {
  header: <g><path d="M2 1 H14 V4 H2Z" fill="#8c1020" /><path d="M5 6.500 H7 M9 6.500 H13 M5 9.500 H7 M9 9.500 H13 M5 12.500 H7 M9 12.500 H13" stroke="#2a9a8c" strokeWidth="1.500" /></g>,
  align: <g fill="none"><path d="M3.500 3 V13.500 H13 M1.500 5 L3.500 2 L5.500 5 M3.500 13.500 L9 8" stroke="#a01030" strokeWidth="1.300" /><path d="M7.500 1.500 H11.500 L14.500 4.500 V11.500 H8" stroke="#777" /></g>,
  dcc: <g><path d="M1.500 10.500 L5.500 6.500 H14.500 L11 10.500 V14 H1.500Z M11 14 L14.500 10 V6.500" fill="#f4f480" stroke="#000" /><path d="M6 1 L8 4 V8 M10 1 L8 4" stroke="#000" strokeWidth="1.500" fill="none" /></g>,
  dim: <g><path d="M1 1 V5 H3 L4 3 L3 1Z M7 1 V5 M9 2 H13 M9 4 H13" fill="none" stroke="#000" strokeWidth="1.300" /><path d="M4 8 H14 M4 10.500 H14 M4 13 H14" stroke="#b01040" strokeWidth="1.500" /><path d="M1.500 7 V14" stroke="#000" strokeDasharray="1 2" /></g>,
  load: <g><rect x="1" y="1" width="5" height="4" /><path d="M3.500 12 V15" stroke="#000" /><path d="M10 2.500 H16 M10 7.500 H16 M10 12.500 H16 M12.500 1 V5 M12.500 6 V10 M12.500 11 V15" stroke="#000" strokeWidth="1.200" /></g>,
  tip: <g><rect x="1.500" y="1.500" width="2" height="8" fill="#fff" stroke="#000" /><path d="M2.500 10 V13" stroke="#000" /><path d="M5 13 H14" stroke="#a01030" strokeWidth="2" strokeDasharray="1 2" /></g>,
  plane: <g><rect x="0" y="11" width="16" height="4" fill="#3cc8a8" /><path d="M8 1 L12 6 H4Z" /><path d="M8 6 V14" stroke="#000" strokeWidth="2.500" strokeDasharray="3 1" /></g>,
  line: <g><path d="M0 9.500 H16" stroke="#2ab8a0" strokeWidth="1.500" /><path d="M1 5.500 H4 M2.500 4 V7 M12 5.500 H15 M13.500 4 V7" stroke="#a01030" /></g>,
  arrow: <path d="M3 6 H8 V3 L13.500 8 L8 13 V10 H3Z" fill="#f8f850" stroke="#333" />,
  clear: <g><rect x="0" y="1" width="7" height="6" fill="#807870" /><path d="M1 4 L3 6 L6 2" stroke="#222" fill="none" /><path d="M10 10 V5 M9 2 L11 4 M8 5.500 H15" stroke="#222" strokeDasharray="2 1" /><rect x="6" y="12" width="9" height="3" fill="#50e4dc" /><rect x="11" y="7" width="4" height="8" fill="#50e4dc" /></g>,
  move: <g><rect x="5" y="12" width="10" height="3" fill="#50e4dc" /><rect x="11" y="7" width="4" height="8" fill="#50e4dc" /><path d="M0.500 1 V6.500 H5 M3 4.500 L5.500 6.500 L3 8.500" stroke="#801020" fill="none" strokeWidth="1.200" /><path d="M9.500 6 V12 M8 11.500 H11 M8 7 H11 M7 4.500 H16" stroke="#222" /><path d="M11 1 L9 4" stroke="#a01030" strokeWidth="1.500" /></g>,
  circle: <circle cx="8" cy="8" r="5.500" fill="none" stroke="#4a1060" strokeWidth="1.300" />,
  cyl: <g><path d="M2 4 V12 Q8 16 14 12 V4Z" fill="#b078c0" stroke="#4a1060" /><ellipse cx="8" cy="4" rx="6" ry="2" fill="#f4e8f6" stroke="#4a1060" /></g>,
  cone: <path d="M8 1.500 L14 12 Q8 15.500 2 12Z" fill="#b078c0" stroke="#4a1060" />,
  ball: <circle cx="8" cy="8" r="6" fill="#a868b8" stroke="#4a1060" />,
  slot: <rect x="5" y="2" width="6" height="12" rx="3" fill="#fff" stroke="#18a89c" strokeWidth="1.500" />,
};

const splitRuns = (text) => text.match(/[\u4e00-\u9fff]+|[^\u4e00-\u9fff]+/g);

function TreeItem({ node, last }) {
  const Slot = node.leaf ? TreeStub : TreeToggle;
  return (
    <TreeRow>
      <Slot aria-label={node.leaf ? undefined : "展开"}>
        <svg width="15" height="16" viewBox="0 0 15 16" aria-hidden="true">
          <path d={last ? "M4.500 0 V8" : "M4.500 0 V16"} stroke="#888" strokeDasharray="1 1" />
          <path d="M5 8.500 H15" stroke="#888" strokeDasharray="1 1" />
          {!node.leaf && (
            <g>
              <rect x="0.500" y="4.500" width="8" height="8" fill="#f4f4f8" stroke="#888" />
              <path d="M2 8.500 H7 M4.500 6 V11" stroke="#222" />
            </g>
          )}
        </svg>
      </Slot>
      <svg width="16" height="16" viewBox="0 0 16 16" aria-hidden="true">{TREE_ICONS[node.icon]}</svg>
      <TreeLabel $selected={node.selected}>
        {splitRuns(node.text).map((run, i) =>
          /[\u4e00-\u9fff]/.test(run) ? <span key={i}>{run}</span> : <Code key={i}>{run}</Code>
        )}
      </TreeLabel>
    </TreeRow>
  );
}

/* ------------------------------------------------------------------ model */

const TAGS = [
  { x: 995, y: 723, w: 42, text: "直线1-1*" },
  { x: 1230, y: 687, w: 35, text: "柱体1*", dim: true },
  { x: 618, y: 635, w: 25, text: "圆1*" },
  { x: 895, y: 646, w: 42, text: "平面1-1*", dim: true },
  { x: 980, y: 643, w: 42, text: "平面1-2*", dim: true },
  { x: 946, y: 601, w: 35, text: "球体1*", dim: true },
  { x: 572, y: 706, w: 43, text: "直线1-2*" },
  { x: 625, y: 719, w: 25, text: "圆2*" },
  { x: 992, y: 719, w: 35, text: "圆锥1*", dim: true },
  { x: 1205, y: 638, w: 35, text: "柱体2*" },
  { x: 1221, y: 692, w: 35, text: "圆槽1*" },
  { x: 1455, y: 732, w: 25, text: "圆3*" },
];

function FeatureTag({ x, y, w, text, dim }) {
  return (
    <g transform={`translate(${x} ${y})`}>
      <rect x="0.500" y="0.500" width={w - 1} height="17" fill="#fff" stroke="#000" />
      <rect width={w} height="4" fill={dim ? "#555" : "#000"} />
      <text x={w / 2} y="14" textAnchor="middle" fontFamily='"Liberation Sans", "Noto Sans CJK SC", sans-serif' fontSize="10" fill="#000">{text}</text>
    </g>
  );
}

function Model() {
  return (
    <svg viewBox="291 159 1627 703" role="img" aria-label="工件模型">
      <defs>
        <linearGradient id="fillet" x1="0" y1="0" x2="0" y2="1">
          <stop offset="0" stopColor="#6e5a42" /><stop offset="0.45" stopColor="#9c8460" /><stop offset="1" stopColor="#f0d8ac" />
        </linearGradient>
        <linearGradient id="wall" x1="0" y1="0" x2="1" y2="0">
          <stop offset="0" stopColor="#ffffdc" /><stop offset="0.25" stopColor="#ffffdc" /><stop offset="0.5" stopColor="#e4c698" /><stop offset="1" stopColor="#8a7252" />
        </linearGradient>
        <linearGradient id="wallR" x1="0" y1="0" x2="1" y2="0">
          <stop offset="0" stopColor="#8a7252" /><stop offset="0.6" stopColor="#c4a880" /><stop offset="0.92" stopColor="#f6deb0" /><stop offset="1" stopColor="#ffffdc" />
        </linearGradient>
        <linearGradient id="bore" x1="0" y1="0" x2="1" y2="0">
          <stop offset="0" stopColor="#7a6448" /><stop offset="0.3" stopColor="#e8cfa2" /><stop offset="0.5" stopColor="#ffffdc" /><stop offset="0.68" stopColor="#e8cfa2" /><stop offset="1" stopColor="#7a6448" />
        </linearGradient>
        <linearGradient id="tipR" x1="0" y1="0" x2="1" y2="0">
          <stop offset="0" stopColor="#fff6d0" /><stop offset="1" stopColor="#8a7048" />
        </linearGradient>
        <linearGradient id="tipL" x1="1" y1="0" x2="0" y2="0">
          <stop offset="0" stopColor="#fff0c8" /><stop offset="1" stopColor="#8a7048" />
        </linearGradient>
        <linearGradient id="pit" x1="0" y1="0" x2="1" y2="0">
          <stop offset="0" stopColor="#8a7250" /><stop offset="0.5" stopColor="#b09668" /><stop offset="1" stopColor="#7c6648" />
        </linearGradient>
        <radialGradient id="dome" cx="0.52" cy="0.78" r="0.62">
          <stop offset="0" stopColor="#c0a47a" /><stop offset="0.45" stopColor="#9c825e" /><stop offset="1" stopColor="#6c563e" />
        </radialGradient>
        <linearGradient id="flare" x1="0" y1="0" x2="1" y2="0">
          <stop offset="0" stopColor="#66523c" /><stop offset="0.3" stopColor="#8c7454" /><stop offset="0.5" stopColor="#b89c72" /><stop offset="0.7" stopColor="#8c7454" /><stop offset="1" stopColor="#66523c" />
        </linearGradient>
      </defs>

      <g stroke="#000" strokeWidth="1.300" strokeLinejoin="round">
        {/* base block */}
        <path d="M544 694 H572 L578 749 H555Z" fill="#66543e" />
        <path d="M544 694 V743 L555 804 V749Z" fill="#7a654a" />
        <path d="M1551 688 Q1566 688 1572 694 L1579 737 H1551Z" fill="#66543e" />
        <path d="M1551 697 L1572 695" fill="none" />
        <path d="M555 749 L1080 743 L1579 737 L1580 790 L555 804Z" fill="#ffffdc" />
        <path d="M555 749 L578 746 L1408 736 L1555 735 L1579 737 L1080 743Z" fill="#3c3226" />

        {/* top face and left end */}
        <path d="M569 650 Q569 632 594 630 L937 625 L1080 623 L1447 619 Q1500 620 1522 627 Q1545 634 1547 646 L1551 675 V735 H1408 V694 L725 702 L578 747 L569 694Z" fill="#66543e" />
        <path d="M1522 627 L1527 651 M594 630 L596 645" fill="none" />

        {/* main front */}
        <path d="M579 728 L725 726 V702 L1407 692 L1408 736 L578 746Z" fill="#ffffdc" />
        <path d="M747 674 L1090 670 L1382 666 Q1402 670 1407 693 L725 702 V697 Q728 682 747 674Z" fill="url(#fillet)" />

        {/* left pocket */}
        <path d="M577 685 Q580 664 598 663 L673 662 Q722 663 747 669 V674 Q727 681 723 693 L673 690 L577 691Z" fill="url(#fillet)" />
        <path d="M577 691 L673 690 V714 L577 715Z" fill="#ffffdc" />
        <path d="M673 690 Q706 690 723 693 L725 718 Q706 714 673 714Z" fill="url(#wall)" />
        <path d="M577 715 L673 714 Q706 714 725 718 V726 L579 728Z" fill="#66543e" />
        <path d="M673 662 V690 M747 669 Q722 678 723 693 V726" fill="none" />
        <ellipse cx="653" cy="719" rx="21" ry="3" fill="url(#bore)" />

        {/* left slot */}
        <path d="M576 667 Q579 646 601 646 L791 643 Q833 643 841 648 Q833 653 791 653 L598 656 Q580 658 576 672Z" fill="#ffffdc" />
        <path d="M791 643 Q833 643 841 648 Q833 653 791 653Z" fill="url(#tipR)" />
        <path d="M598 656 L599 663" fill="none" />
        <ellipse cx="644" cy="635" rx="23" ry="3" fill="url(#bore)" />
        <ellipse cx="916" cy="659" rx="74" ry="7" fill="url(#pit)" strokeDasharray="7 2" />

        {/* right slot */}
        <path d="M1088 661 Q1096 657 1136 657 L1307 654 Q1350 654 1357 659 Q1350 664 1307 664 L1136 666 Q1096 666 1088 661Z" fill="#ffffdc" />
        <path d="M1136 657 Q1096 657 1088 661 Q1096 666 1136 666Z" fill="url(#tipL)" />
        <path d="M1307 654 Q1350 654 1357 659 Q1350 664 1307 664Z" fill="url(#tipR)" />

        {/* right bore with its bolt circle */}
        <ellipse cx="1304" cy="638" rx="97" ry="10" fill="url(#bore)" />
        <path d="M1304 638 V647" strokeWidth="1" />
        <g fill="#3a2e22">
          <ellipse cx="1187" cy="635" rx="12" ry="2" /><ellipse cx="1301" cy="625" rx="12" ry="2" />
          <ellipse cx="1419" cy="632" rx="12" ry="2" /><ellipse cx="1377" cy="647" rx="12" ry="2" /><ellipse cx="1236" cy="648" rx="10" ry="2" />
        </g>

        {/* right pocket */}
        <path d="M1382 660 Q1400 653 1453 653 L1527 651 Q1549 655 1551 678 L1455 679 Q1420 680 1407 684 Q1402 668 1382 665Z" fill="url(#fillet)" />
        <path d="M1407 684 Q1420 680 1455 679 V723 Q1424 723 1409 727Z" fill="url(#wallR)" />
        <path d="M1455 679 L1551 678 L1552 721 L1455 723Z" fill="#ffffdc" />
        <path d="M1409 727 Q1424 723 1455 723 L1552 721 L1555 735 L1408 736Z" fill="#66543e" />
        <path d="M1453 653 V679" fill="none" />
        <ellipse cx="1480" cy="727" rx="24" ry="3" fill="url(#bore)" />

        {/* dome */}
        <path d="M940 621 Q938 632 920 636 Q912 639 922 642 Q950 648 1010 648 Q1075 647 1103 639 Q1108 636 1098 633 Q1085 630 1081 620Z" fill="url(#flare)" />
        <path d="M940 621 A72 72 0 0 1 1081 620 Q1050 627 1010 627 Q965 627 940 621Z" fill="url(#dome)" strokeDasharray="9 1" />
        <path d="M940 621 Q965 627 1010 627 Q1050 627 1081 620" fill="none" />
        <path d="M1010 580 V627 M952 608 Q1010 612 1072 602 M946 617 Q1010 624 1076 612" fill="none" stroke="#55503f" strokeWidth="0.700" />
        <path d="M836 726 L1155 722" strokeWidth="0.800" />
      </g>

      {/* work-piece axes */}
      <g fill="#f2f2f2" stroke="#f2f2f2">
        <path d="M577 679 V645" strokeWidth="3" /><path d="M577 624 L582 647 H572Z" />
        <path d="M577 679 H612" strokeWidth="3" /><path d="M632 679 L610 684 V674Z" />
        <circle cx="577" cy="679" r="3" />
      </g>
      <g fontFamily='"Liberation Sans", sans-serif' fontSize="11" fill="#333" textAnchor="middle">
        <text x="580" y="624">Z</text>
        <text x="635" y="679">X</text>
      </g>

      {TAGS.map((t) => <FeatureTag key={t.text} {...t} />)}

      {/* pointer with its highlight */}
      <circle cx="530.500" cy="479.500" r="43" fill="#caf03c" />
      <path d="M530.500 479 V496 L534.500 492.500 L537 498 L539.500 497 L537 491.500 H542Z" fill="#fff" stroke="#111" />
    </svg>
  );
}

/* -------------------------------------------------------------------- app */

export default function App() {
  return (
    <Window>
      <GlobalStyle />
      <SharedPaint />
      <TitleBar>
        <svg width="16" height="16" viewBox="0 0 16 16" aria-hidden="true">
          <path d="M4 1 L12 1 L16 8 L12 15 L4 15 L0 8Z" fill="#c4dce8" />
          <circle cx="8" cy="8" r="5" fill="#3a88b0" /><path d="M4 6 L8 8 L12 6 M8 8 V13" stroke="#9cd0e8" fill="none" />
        </svg>
        <AppTitle>PC-DMIS CAD++ 2015.1 (Release) - 脱机</AppTitle>
        <CaptionButton aria-label="最小化"><svg width="11" height="11"><path d="M0 5.500 H11" stroke="#888" /></svg></CaptionButton>
        <CaptionButton aria-label="还原"><svg width="11" height="11"><path d="M0.500 2.500 H8.500 V10.500 H0.500Z M2.500 2.500 V0.500 H10.500 V8.500 H8.500" fill="none" stroke="#888" /></svg></CaptionButton>
        <CaptionButton aria-label="关闭"><svg width="11" height="11"><path d="M0.500 0.500 L10.500 10.500 M10.500 0.500 L0.500 10.500" stroke="#888" /></svg></CaptionButton>
      </TitleBar>
      <MenuBar>
        <MenuEdge />
        {MENUS.map(([name, key]) => <MenuItem key={key}>{name}(<u>{key}</u>)</MenuItem>)}
      </MenuBar>

      {TOOLBARS.map((groups, row) => (
        <ToolRow key={row}>
          {row === 0 && (
            <ToolGroup>
              <Grip />
              <Combos>
                {COMBOS.map((c) => (
                  <ComboBox key={c.label} $w={c.w} $latin={c.latin}>
                    <select aria-label={c.label} defaultValue={c.value}><option>{c.value}</option></select>
                    <svg width="9" height="6" viewBox="0 0 9 6" aria-hidden="true"><path d="M0.500 0.500 L4.500 4.500 L8.500 0.500" fill="none" stroke="#444" /></svg>
                  </ComboBox>
                ))}
              </Combos>
            </ToolGroup>
          )}
          {groups.map((items, i) => (
            <ToolGroup key={i}>
              <Grip />
              <Tools items={items} />
            </ToolGroup>
          ))}
        </ToolRow>
      ))}

      <Workspace>
        <EditPanel>
          <PanelHead>
            <PanelTitle>编辑窗口 - TEST - 01.PRG</PanelTitle>
            <CloseButton aria-label="关闭编辑窗口"><Cross /></CloseButton>
          </PanelHead>
          <Tree>
            {PROGRAM.map((node, i) => <TreeItem key={i} node={node} last={i === PROGRAM.length - 1} />)}
          </Tree>
        </EditPanel>

        <RightSide>
          <Viewport><Model /></Viewport>
          <StatusPane>
            <StatusStrip>
              <CloseButton aria-label="关闭状态窗口"><Cross /></CloseButton>
              <StripTitle>状态窗口</StripTitle>
            </StatusStrip>
            <Sheet>
              <Results>
                <thead>
                  <ResultTitle><th colSpan={4}>点1=测量点从1开始触测</th></ResultTitle>
                  <ResultHead><th>AX</th><th>NOMINAL</th><th>MEAS</th><th>DEV</th></ResultHead>
                </thead>
                <tbody>
                  <ResultRow><td>Y</td><td>-5.000</td><td>-5.000</td><td>0.000</td></ResultRow>
                </tbody>
              </Results>
            </Sheet>
          </StatusPane>
        </RightSide>
      </Workspace>

      <StatusBar>
        <Mode>2D 旋转模式</Mode>
        <Tag>X</Tag><Cell $w={58}>104.029</Cell>
        <Tag>Y</Tag><Cell $w={58}>-1.713</Cell>
        <Tag>Z</Tag><Cell $w={58}>43.475</Cell>
        <Tag $w={24}>标准</Tag><Cell $w={52}>0</Cell>
        <Cell $w={72} $pad={7}>0</Cell>
        <Cell $w={36} $han>毫米</Cell>
        <Cell $w={104}>行:231, 列: 019</Cell>
      </StatusBar>
    </Window>
  );
}
